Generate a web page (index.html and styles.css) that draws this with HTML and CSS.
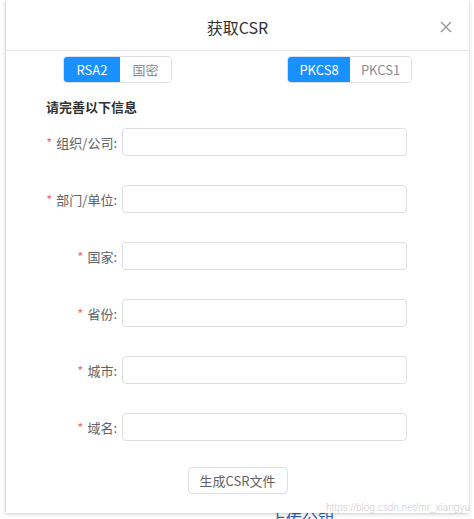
FILE: index.html
```html
<!DOCTYPE html>
<html lang="zh">
<head>
<meta charset="utf-8">
<link rel="stylesheet" href="styles.css">
</head>
<body>
<div class="page">
  <div class="behind-link">上传公钥</div>
  <div class="dialog">
    <div class="dialog-header">
      <span class="dialog-title">获取CSR</span>
      <span class="dialog-close" aria-label="close">
        <svg width="12" height="12" viewBox="0 0 12 12"><path d="M1 1L11 11M11 1L1 11" stroke="#909399" stroke-width="1.3" fill="none"/></svg>
      </span>
    </div>
    <div class="dialog-body">
      <div class="toggle-row">
        <div class="seg">
          <span class="seg-item active w-rsa">RSA2</span>
          <span class="seg-item w-gm">国密</span>
        </div>
        <div class="seg">
          <span class="seg-item active w-p8">PKCS8</span>
          <span class="seg-item w-p1">PKCS1</span>
        </div>
      </div>
      <div class="section-title">请完善以下信息</div>
      <div class="form">
        <div class="form-row"><label class="form-label"><span class="req">*</span>组织/公司:</label><input class="form-input" type="text"></div>
        <div class="form-row"><label class="form-label"><span class="req">*</span>部门/单位:</label><input class="form-input" type="text"></div>
        <div class="form-row"><label class="form-label"><span class="req">*</span>国家:</label><input class="form-input" type="text"></div>
        <div class="form-row"><label class="form-label"><span class="req">*</span>省份:</label><input class="form-input" type="text"></div>
        <div class="form-row"><label class="form-label"><span class="req">*</span>城市:</label><input class="form-input" type="text"></div>
        <div class="form-row"><label class="form-label"><span class="req">*</span>域名:</label><input class="form-input" type="text"></div>
      </div>
      <div class="footer">
        <button class="btn" type="button">生成CSR文件</button>
      </div>
    </div>
  </div>
  <div class="watermark">https://blog.csdn.net/mr_xiangyu</div>
</div>
</body>
</html>
```
FILE: styles.css
```css
* { box-sizing: border-box; }
html, body { margin: 0; padding: 0; }
body {
  background: #fff;
  font-family: "Noto Sans CJK SC", "Noto Sans", sans-serif;
  color: #606266;
  width: 474px;
  height: 519px;
  overflow: hidden;
}
.page {
  position: relative;
  width: 474px;
  height: 519px;
  padding-left: 6px;
}
.dialog {
  position: relative;
  width: 463px;
  height: 513px;
  background: #fff;
  box-shadow: 0 1px 4px rgba(0,0,0,0.18), -1px 0 3px rgba(0,0,0,0.08);
  display: flex;
  flex-direction: column;
}
.dialog-header {
  height: 51px;
  border-bottom: 1px solid #e8e8e8;
  display: flex;
  align-items: center;
  justify-content: center;
  position: relative;
}
.dialog-title {
  font-size: 16px;
  color: #303133;
  line-height: 20px;
  margin-top: 3px;
}
.dialog-close {
  position: absolute;
  right: 17px;
  top: 21px;
  width: 12px;
  height: 12px;
  display: flex;
}
.dialog-body {
  display: flex;
  flex-direction: column;
  padding-top: 5px;
}
.toggle-row {
  display: flex;
  justify-content: space-between;
  padding: 0 57px;
}
.seg {
  display: flex;
  border: 1px solid #dcdfe6;
  border-radius: 4px;
  overflow: hidden;
  height: 27px;
}
.seg-item {
  display: flex;
  align-items: center;
  justify-content: center;
  font-size: 13px;
  color: #8a8c90;
  background: #fff;
}
.seg-item.active {
  background: #1890ff;
  color: #fff;
}
.w-rsa { width: 56px; }
.w-gm { width: 51px; }
.w-p8 { width: 62px; }
.w-p1 { width: 61px; }
.section-title {
  margin-top: 14px;
  padding-left: 40px;
  font-size: 13px;
  font-weight: bold;
  color: #303133;
  line-height: 20px;
}
.form {
  margin-top: 11px;
  display: flex;
  flex-direction: column;
  gap: 29px;
}
.form-row {
  display: flex;
  align-items: center;
  height: 28px;
}
.form-label {
  width: 116px;
  padding-right: 5px;
  text-align: right;
  font-size: 13px;
  color: #606266;
}
.req {
  color: #f56c6c;
  margin-right: 4px;
}
.form-input {
  width: 285px;
  height: 28px;
  border: 1px solid #dcdfe6;
  border-radius: 4px;
  background: #fff;
  outline: none;
  padding: 0 8px;
}
.footer {
  display: flex;
  justify-content: center;
  margin-top: 26px;
}
.btn {
  width: 100px;
  height: 27px;
  border: 1px solid #dcdfe6;
  border-radius: 4px;
  background: #fff;
  font-family: inherit;
  font-size: 13px;
  color: #606266;
  padding: 0;
}
.behind-link {
  position: absolute;
  left: 270px;
  top: 506px;
  font-size: 16px;
  color: #2b5cb8;
}
.watermark {
  position: absolute;
  right: 4px;
  top: 502px;
  font-family: "Liberation Sans", sans-serif;
  font-size: 10px;
  color: rgba(200,200,200,0.7);
}
```
